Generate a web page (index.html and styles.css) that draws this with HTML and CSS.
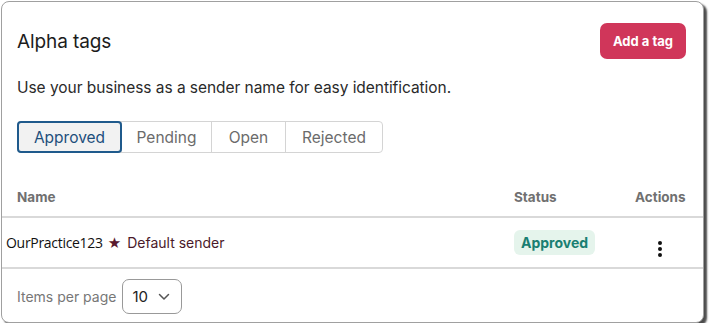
FILE: index.html
```html
<!DOCTYPE html>
<html>
<head>
<meta charset="utf-8">
<link rel="stylesheet" href="styles.css">
</head>
<body>
<div class="card">
  <div class="header">
    <h1 class="title">Alpha tags</h1>
    <button class="btn-primary">Add a tag</button>
  </div>
  <p class="subtitle">Use your business as a sender name for easy identification.</p>
  <div class="tabs">
    <div class="tab active">Approved</div>
    <div class="tab">Pending</div>
    <div class="tab">Open</div>
    <div class="tab">Rejected</div>
  </div>
  <div class="table">
    <div class="thead">
      <div class="col-name">Name</div>
      <div class="col-status">Status</div>
      <div class="col-actions">Actions</div>
    </div>
    <div class="row">
      <div class="col-name cell-name"><span class="tag-name">OurPractice123</span><span class="star">★</span><span class="default">Default sender</span></div>
      <div class="col-status"><span class="badge">Approved</span></div>
      <div class="col-actions"><span class="kebab"><i></i><i></i><i></i></span></div>
    </div>
  </div>
  <div class="footer">
    <span class="ipp">Items per page</span>
    <div class="select"><span>10</span>
      <svg width="12" height="8" viewBox="0 0 12 8"><path d="M1.5 1.5 L6 6 L10.5 1.5" fill="none" stroke="#555" stroke-width="1.5" stroke-linecap="round" stroke-linejoin="round"/></svg>
    </div>
  </div>
</div>
</body>
</html>
```
FILE: styles.css
```css
html, body { margin: 0; padding: 0; background: #fff; }
body { padding: 1px 0 0 1px; font-family: "Inter", "DejaVu Sans", sans-serif; color: #222; }
.card {
  width: 703px;
  height: 322px;
  box-sizing: border-box;
  border: 1px solid #a0a0a0;
  border-radius: 8px;
  box-shadow: 3px 3px 2px rgba(0,0,0,0.7);
  background: #fff;
  overflow: hidden;
}
.header { display: flex; justify-content: space-between; align-items: center; padding: 21px 17px 0 15px; }
.title { margin: 0; font-size: 19px; font-weight: 400; color: #1c1c1c; letter-spacing: -0.1px; }
.btn-primary {
  background: #d0365a; color: #fff; border: none; border-radius: 7px;
  font-family: inherit; font-weight: 700; font-size: 13px;
  width: 86px; height: 36px; padding: 0;
}
.subtitle { margin: 19px 0 0 15px; font-size: 15.5px; color: #2a2a2a; letter-spacing: -0.05px; line-height: 19px; }
.tabs { display: flex; margin: 24px 0 0 15px; width: max-content; border: 1px solid #d4d4d4; border-radius: 4px; }
.tab { height: 30px; display: flex; align-items: center; justify-content: center; font-size: 15.5px; color: #6b6b6b; border-left: 1px solid #d4d4d4; }
.tab:nth-child(1) { width: 103px; border-left: none; }
.tab:nth-child(2) { width: 89px; }
.tab:nth-child(3) { width: 73px; }
.tab:nth-child(4) { width: 96px; }
.tab.active { background: #f2f2f2; color: #1d4f7c; outline: 2px solid #1f5a8c; outline-offset: -1px; border-radius: 3px; position: relative; }
.table { margin-top: 29px; }
.thead { display: flex; align-items: center; height: 30px; border-bottom: 2px solid #d9d9d9; font-weight: 700; font-size: 13.5px; color: #707070; padding-bottom: 4px; }
.col-name { flex: 1; padding-left: 15px; }
.col-status { width: 121px; }
.col-actions { width: 68px; text-align: left; }
.row { display: flex; align-items: center; height: 49px; border-bottom: 2px solid #d9d9d9; }
.cell-name { padding-left: 4px; display: flex; align-items: center; font-size: 14px; }
.tag-name { font-family: "Open Sans", "Noto Sans", sans-serif; color: #111; letter-spacing: -0.3px; }
.star { color: #5a1a2e; margin: 0 6px 0 5px; font-size: 15px; font-family: "DejaVu Sans", sans-serif; }
.default { color: #4a1a2a; font-size: 14px; }
.badge { display: inline-block; background: #e5f4ec; color: #1a7f72; font-weight: 700; font-size: 14px; padding: 4px 7px; border-radius: 6px; }
.kebab { display: inline-flex; flex-direction: column; gap: 2px; margin-left: 23px; }
.kebab i { width: 4px; height: 4px; background: #111; border-radius: 50%; display: block; }
.footer { display: flex; align-items: center; padding: 10px 16px 0 15px; }
.ipp { font-size: 14px; color: #777; margin-right: 6px; }
.select { width: 60px; height: 35px; box-sizing: border-box; border: 1px solid #999; border-radius: 7px; display: flex; align-items: center; padding-left: 9px; gap: 10px; font-size: 15px; color: #222; }
```
